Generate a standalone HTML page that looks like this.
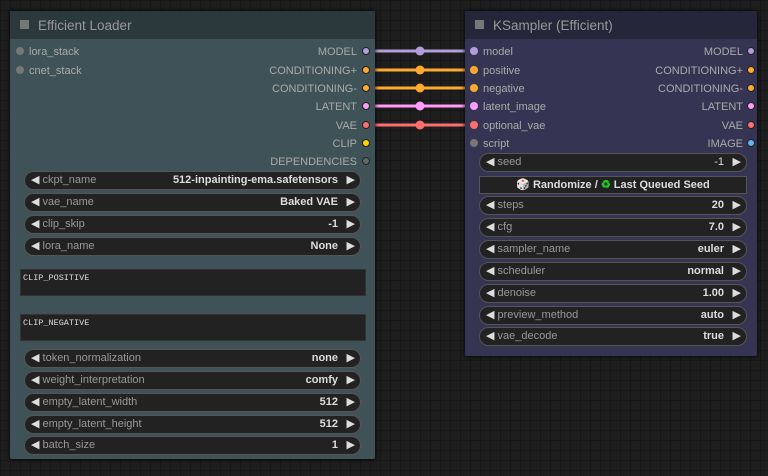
<!DOCTYPE html>
<html><head><meta charset="utf-8"><style>
*{margin:0;padding:0;box-sizing:border-box}
body{width:768px;height:476px;overflow:hidden;background:#1e1e1e;font-family:"Liberation Sans",sans-serif;font-size:11px;color:#aaa;position:relative;
background-image:linear-gradient(#171717 1px,transparent 1px),linear-gradient(90deg,#171717 1px,transparent 1px);background-size:10px 10px;}
.abs{position:absolute}
.node{position:absolute;border-radius:2px;box-shadow:0 0 5px #000}
.title{position:absolute;left:0;right:0;top:0;height:28px;font-size:13.5px;color:#999;padding:7px 0 0 28px}
.title:before{content:"";position:absolute;left:10px;top:9px;width:9px;height:9px;background:#777}
.slot{position:absolute;height:14px;line-height:14px;font-size:11px;color:#aaa;white-space:nowrap}
.dot{position:absolute;width:8px;height:8px;border-radius:50%}
.w{position:absolute;height:19px;background:#222;border:1px solid #555;border-radius:10px;color:#999;font-size:11px;line-height:17px}
.w .l{position:absolute;left:6px}
.w .l:before{content:"◀ ";color:#ddd}
.w .v{position:absolute;right:22px;color:#ddd;font-weight:bold}
.w .v:after{content:"▶";position:absolute;right:-17px;color:#ddd;font-weight:normal}
.ta{position:absolute;background:#222;border:1px solid #333;font-family:"Liberation Mono",monospace;font-size:8.5px;color:#ddd;padding:3px 2px}
</style></head><body>
<svg class="abs" style="left:0;top:0" width="768" height="476">
<g stroke-width="3">
<line x1="366" y1="51" x2="474" y2="51" stroke="#b39ddb"/>
<line x1="366" y1="70" x2="474" y2="70" stroke="#ffa931"/>
<line x1="366" y1="88" x2="474" y2="88" stroke="#ffa931"/>
<line x1="366" y1="106" x2="474" y2="106" stroke="#ff9cf9"/>
<line x1="366" y1="125" x2="474" y2="125" stroke="#ff6e6e"/>
</g>
<circle cx="420" cy="51" r="4.5" fill="#b39ddb"/>
<circle cx="420" cy="70" r="4.5" fill="#ffa931"/>
<circle cx="420" cy="88" r="4.5" fill="#ffa931"/>
<circle cx="420" cy="106" r="4.5" fill="#ff9cf9"/>
<circle cx="420" cy="125" r="4.5" fill="#ff6e6e"/>
</svg>

<div class="node" style="left:10px;top:11px;width:365px;height:448px;background:#3e5257">
<div class="title" style="background:#2b383c">Efficient Loader</div>
</div>
<div class="dot" style="left:16px;top:47px;background:#777"></div><div class="slot" style="left:29px;top:45px">lora_stack</div>
<div class="dot" style="left:16px;top:66px;background:#777"></div><div class="slot" style="left:29px;top:64px">cnet_stack</div>
<div class="slot" style="right:411px;top:45px">MODEL</div><div class="dot" style="left:362px;top:47px;background:#b39ddb;border:1px solid #222"></div>
<div class="slot" style="right:411px;top:64px">CONDITIONING+</div><div class="dot" style="left:362px;top:66px;background:#ffa931;border:1px solid #222"></div>
<div class="slot" style="right:411px;top:82px">CONDITIONING-</div><div class="dot" style="left:362px;top:84px;background:#ffa931;border:1px solid #222"></div>
<div class="slot" style="right:411px;top:100px">LATENT</div><div class="dot" style="left:362px;top:102px;background:#ff9cf9;border:1px solid #222"></div>
<div class="slot" style="right:411px;top:119px">VAE</div><div class="dot" style="left:362px;top:121px;background:#ff6e6e;border:1px solid #222"></div>
<div class="slot" style="right:411px;top:137px">CLIP</div><div class="dot" style="left:362px;top:139px;background:#ffd500;border:1px solid #222"></div>
<div class="slot" style="right:411px;top:155px">DEPENDENCIES</div><div class="dot" style="left:362px;top:157px;background:#666;border:1px solid #222"></div>

<div class="w" style="left:24px;top:171px;width:337px"><span class="l">ckpt_name</span><span class="v">512-inpainting-ema.safetensors</span></div>
<div class="w" style="left:24px;top:193px;width:337px"><span class="l">vae_name</span><span class="v">Baked VAE</span></div>
<div class="w" style="left:24px;top:215px;width:337px"><span class="l">clip_skip</span><span class="v">-1</span></div>
<div class="w" style="left:24px;top:237px;width:337px"><span class="l">lora_name</span><span class="v">None</span></div>
<div class="ta" style="left:20px;top:269px;width:346px;height:27px">CLIP_POSITIVE</div>
<div class="ta" style="left:20px;top:314px;width:346px;height:27px">CLIP_NEGATIVE</div>
<div class="w" style="left:24px;top:349px;width:337px"><span class="l">token_normalization</span><span class="v">none</span></div>
<div class="w" style="left:24px;top:371px;width:337px"><span class="l">weight_interpretation</span><span class="v">comfy</span></div>
<div class="w" style="left:24px;top:393px;width:337px"><span class="l">empty_latent_width</span><span class="v">512</span></div>
<div class="w" style="left:24px;top:415px;width:337px"><span class="l">empty_latent_height</span><span class="v">512</span></div>
<div class="w" style="left:24px;top:436px;width:337px"><span class="l">batch_size</span><span class="v">1</span></div>

<div class="node" style="left:465px;top:11px;width:292px;height:345px;background:#353553">
<div class="title" style="background:#26263a">KSampler (Efficient)</div>
</div>
<div class="dot" style="left:470px;top:47px;background:#b39ddb"></div><div class="slot" style="left:483px;top:45px">model</div>
<div class="dot" style="left:470px;top:66px;background:#ffa931"></div><div class="slot" style="left:483px;top:64px">positive</div>
<div class="dot" style="left:470px;top:84px;background:#ffa931"></div><div class="slot" style="left:483px;top:82px">negative</div>
<div class="dot" style="left:470px;top:102px;background:#ff9cf9"></div><div class="slot" style="left:483px;top:100px">latent_image</div>
<div class="dot" style="left:470px;top:121px;background:#ff6e6e"></div><div class="slot" style="left:483px;top:119px">optional_vae</div>
<div class="dot" style="left:470px;top:139px;background:#777"></div><div class="slot" style="left:483px;top:137px">script</div>
<div class="slot" style="right:25px;top:45px">MODEL</div><div class="dot" style="left:747px;top:47px;background:#b39ddb;border:1px solid #222"></div>
<div class="slot" style="right:25px;top:64px">CONDITIONING+</div><div class="dot" style="left:747px;top:66px;background:#ffa931;border:1px solid #222"></div>
<div class="slot" style="right:25px;top:82px">CONDITIONING-</div><div class="dot" style="left:747px;top:84px;background:#ffa931;border:1px solid #222"></div>
<div class="slot" style="right:25px;top:100px">LATENT</div><div class="dot" style="left:747px;top:102px;background:#ff9cf9;border:1px solid #222"></div>
<div class="slot" style="right:25px;top:119px">VAE</div><div class="dot" style="left:747px;top:121px;background:#ff6e6e;border:1px solid #222"></div>
<div class="slot" style="right:25px;top:137px">IMAGE</div><div class="dot" style="left:747px;top:139px;background:#64b5f6;border:1px solid #222"></div>

<div class="w" style="left:479px;top:153px;width:268px"><span class="l">seed</span><span class="v" style="font-weight:normal">-1</span></div>
<div class="abs" style="left:479px;top:176px;width:268px;height:18px;background:#222;border:1px solid #555;color:#ddd;font-weight:bold;text-align:center;line-height:16px;font-size:11px">🎲 Randomize / <span style="color:#2c2">♻</span> Last Queued Seed</div>
<div class="w" style="left:479px;top:196px;width:268px"><span class="l">steps</span><span class="v">20</span></div>
<div class="w" style="left:479px;top:218px;width:268px"><span class="l">cfg</span><span class="v">7.0</span></div>
<div class="w" style="left:479px;top:240px;width:268px"><span class="l">sampler_name</span><span class="v">euler</span></div>
<div class="w" style="left:479px;top:262px;width:268px"><span class="l">scheduler</span><span class="v">normal</span></div>
<div class="w" style="left:479px;top:284px;width:268px"><span class="l">denoise</span><span class="v">1.00</span></div>
<div class="w" style="left:479px;top:306px;width:268px"><span class="l">preview_method</span><span class="v">auto</span></div>
<div class="w" style="left:479px;top:327px;width:268px"><span class="l">vae_decode</span><span class="v">true</span></div>
</body></html>
